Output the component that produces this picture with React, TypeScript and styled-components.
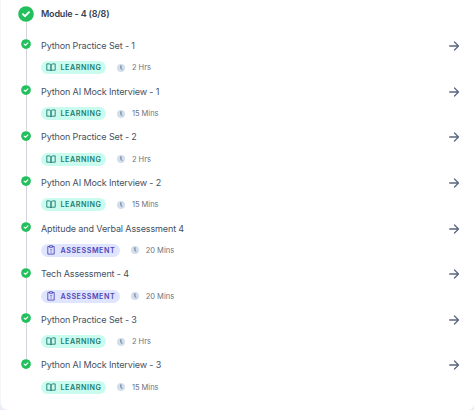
import styled, { createGlobalStyle } from 'styled-components'

type Kind = 'learning' | 'assessment'

const items: { title: string; kind: Kind; time: string }[] = [
  { title: 'Python Practice Set - 1', kind: 'learning', time: '2 Hrs' },
  { title: 'Python AI Mock Interview - 1', kind: 'learning', time: '15 Mins' },
  { title: 'Python Practice Set - 2', kind: 'learning', time: '2 Hrs' },
  { title: 'Python AI Mock Interview - 2', kind: 'learning', time: '15 Mins' },
  { title: 'Aptitude and Verbal Assessment 4', kind: 'assessment', time: '20 Mins' },
  { title: 'Tech Assessment - 4', kind: 'assessment', time: '20 Mins' },
  { title: 'Python Practice Set - 3', kind: 'learning', time: '2 Hrs' },
  { title: 'Python AI Mock Interview - 3', kind: 'learning', time: '15 Mins' },
]

function Check({ size }: { size: number }) {
  return (
    <Icon width={size} height={size} viewBox="0 0 16 16">
      <circle cx="8" cy="8" r="7.8" fill="#22c05c" />
      <path d="M5 8.2l2.1 2L11 6.2" fill="none" stroke="#fff" strokeWidth="1.9" strokeLinecap="round" strokeLinejoin="round" />
    </Icon>
  )
}

function Book() {
  return (
    <Icon width="10" height="9" viewBox="0 0 10 9" fill="none" stroke="currentColor" strokeWidth="0.9" strokeLinejoin="round">
      <path d="M5 1.9C4.6 1.2 4 .9 3.2 .9H.8v6.3h2.6c.8 0 1.3.2 1.6.8.3-.6.8-.8 1.6-.8h2.6V.9H6.8C6 .9 5.4 1.2 5 1.9zV8" />
      <path d="M5 1.9V8" />
    </Icon>
  )
}

function Clipboard() {
  return (
    <Icon width="10" height="10" viewBox="0 0 10 10" fill="none" stroke="currentColor" strokeWidth="0.9" strokeLinejoin="round">
      <path d="M3.4 1.5H1.8v7.6h6.4V1.5H6.6" />
      <path d="M3.5 .7h3v1.6h-3z" />
      <path d="M4 4.4h2.2M4.2 6h1.8M4.6 7.4h1" strokeWidth="0.6" />
    </Icon>
  )
}

function Clock() {
  return (
    <Icon width="8" height="8" viewBox="0 0 8 8">
      <circle cx="4" cy="4" r="4" fill="#d3deec" />
      <path d="M3.9 1.7v2.5l1 1.3" fill="none" stroke="#53647f" strokeWidth="0.9" strokeLinecap="round" />
    </Icon>
  )
}

function Arrow() {
  return (
    <Icon width="12" height="12" viewBox="0 0 12 12" fill="none" stroke="#5b6780" strokeWidth="1.3" strokeLinecap="round" strokeLinejoin="round">
      <path d="M1.7 6h8.8M6.5 2l4 4-4 4" />
    </Icon>
  )
}

function App() {
  return (
    <Card>
      <GlobalStyle />
      <Header>
        <Rail>
          <Segment $height={5.5} $hidden />
          <Check size={16} />
          <Segment />
        </Rail>
        <Heading>Module - 4 (8/8)</Heading>
      </Header>
      {items.map((item, i) => (
        <Row key={item.title}>
          <Rail>
            <Segment $height={4.3} />
            <Check size={10} />
            <Segment $hidden={i === items.length - 1} />
          </Rail>
          <Content>
            <Title>{item.title}</Title>
            <Meta>
              <Badge $kind={item.kind}>
                {item.kind === 'learning' ? <Book /> : <Clipboard />}
                {item.kind.toUpperCase()}
              </Badge>
              <Clock />
              <Time>{item.time}</Time>
            </Meta>
          </Content>
          <Open aria-label={item.title}>
            <Arrow />
          </Open>
        </Row>
      ))}
    </Card>
  )
}

export default App

const GlobalStyle = createGlobalStyle`
  * {
    box-sizing: border-box;
  }

  body {
    margin: 0;
    background: #e9eef6;
    font-family: Inter, sans-serif;
    overflow: hidden;
  }
`

const Card = styled.div`
  height: 410px;
  padding-right: 14px;
  background: #fff;
  border-left: 1px solid #f3f5f8;
  border-radius: 0 0 6px 8px;
`

const Icon = styled.svg`
  display: block;
  flex-shrink: 0;
`

const Header = styled.div`
  display: flex;
  height: 35px;
  padding-left: 17px;
`

const Row = styled.div`
  display: flex;
  height: 45.65px;
  padding-left: 17px;
`

const Rail = styled.div`
  display: flex;
  flex-direction: column;
  align-items: center;
  width: 16px;
  margin-right: 7px;
`

const Segment = styled.div<{ $height?: number; $hidden?: boolean }>`
  flex: ${({ $height }) => ($height ? `0 0 ${$height}px` : '1')};
  width: 1px;
  background: ${({ $hidden }) => ($hidden ? 'transparent' : '#d2d5d9')};
`

const Heading = styled.div`
  font-size: 9px;
  line-height: 28px;
  font-weight: 600;
  letter-spacing: -0.18px;
  color: #364152;
`

const Content = styled.div`
  flex: 1;
`

const Title = styled.div`
  font-size: 9px;
  line-height: 22.4px;
  letter-spacing: -0.12px;
  color: #475060;
`

const Meta = styled.div`
  display: flex;
  align-items: center;
  height: 21px;
`

const Badge = styled.div<{ $kind: Kind }>`
  display: flex;
  align-items: center;
  gap: 4.5px;
  height: 13px;
  padding: 0 4.5px 0 5px;
  margin-right: 11px;
  border-radius: 6.5px;
  font-size: 7.2px;
  font-weight: 600;
  letter-spacing: 0.53px;
  color: ${({ $kind }) => ($kind === 'learning' ? '#217c72' : '#5147b5')};
  background: ${({ $kind }) => ($kind === 'learning' ? '#c9fbef' : '#e0e5ff')};
`

const Time = styled.span`
  margin-left: 7px;
  font-size: 7.5px;
  color: #6b7280;
`

const Open = styled.button`
  display: flex;
  align-items: center;
  height: 22px;
  padding: 0;
  border: 0;
  background: none;
`
